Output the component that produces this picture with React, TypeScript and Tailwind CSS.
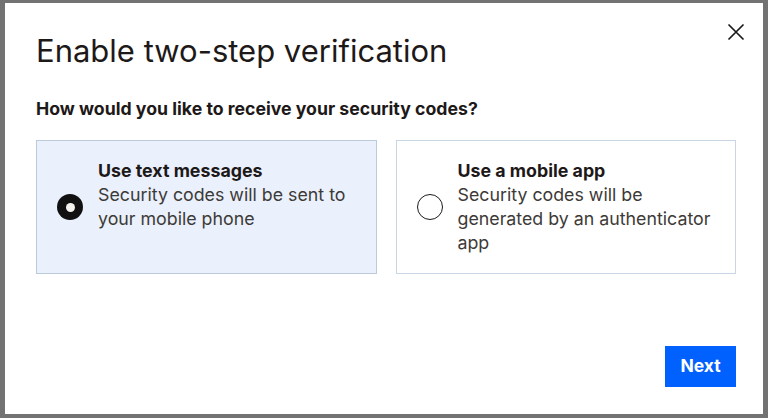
import { useState } from 'react';

const options = [
  {
    id: 'sms',
    title: 'Use text messages',
    desc: 'Security codes will be sent to your mobile phone',
  },
  {
    id: 'app',
    title: 'Use a mobile app',
    desc: 'Security codes will be generated by an authenticator app',
  },
];

export default function App() {
  const [selected, setSelected] = useState('sms');

  return (
    <div className="w-[768px] h-[418px] overflow-hidden bg-[#727272] pl-[5px] pr-[5px] pt-[3px] pb-[4px] font-['Inter',sans-serif]">
      <div className="relative flex h-full flex-col bg-white pl-[31px] pr-[27px]">
        <button className="absolute right-[18px] top-[20px] text-[#1e1919]" aria-label="Close">
          <svg width="18" height="18" viewBox="0 0 18 18" fill="none" stroke="currentColor" strokeWidth="1.7">
            <path d="M1.5 1.5 L16.5 16.5 M16.5 1.5 L1.5 16.5" />
          </svg>
        </button>

        <h1 className="mt-[30px] text-[31px] leading-[36px] font-normal text-[#1e1919]">
          Enable two-step verification
        </h1>

        <p className="mt-[28px] text-[17.7px] leading-[24px] font-bold text-[#1e1919]">
          How would you like to receive your security codes?
        </p>

        <div className="mt-[19px] grid grid-cols-2 gap-[19px]">
          {options.map((o) => {
            const active = selected === o.id;
            return (
              <button
                key={o.id}
                onClick={() => setSelected(o.id)}
                className={`flex h-[134px] items-center gap-[15px] border text-left pl-[20px] pr-[18px] ${
                  active ? 'bg-[#eaf1fc] border-[#bccbdc]' : 'bg-white border-[#c9d6e3]'
                }`}
              >
                {active ? (
                  <span className="flex h-[26px] w-[26px] shrink-0 items-center justify-center rounded-full bg-[#111]">
                    <span className="h-[9px] w-[9px] rounded-full bg-[#f5f3ee]" />
                  </span>
                ) : (
                  <span className="h-[26px] w-[26px] shrink-0 rounded-full border-[1.5px] border-[#1e1919] bg-white" />
                )}
                <span className="flex h-[96px] flex-col text-[17.8px] leading-[24px] text-[#1e1919]">
                  <span className="font-bold">{o.title}</span>
                  <span className="text-[#3d3a38]">{o.desc}</span>
                </span>
              </button>
            );
          })}
        </div>

        <div className="mt-auto mb-[27px] flex justify-end">
          <button className="h-[41px] w-[71px] bg-[#0061fe] text-[17.5px] font-bold text-white">
            Next
          </button>
        </div>
      </div>
    </div>
  );
}
